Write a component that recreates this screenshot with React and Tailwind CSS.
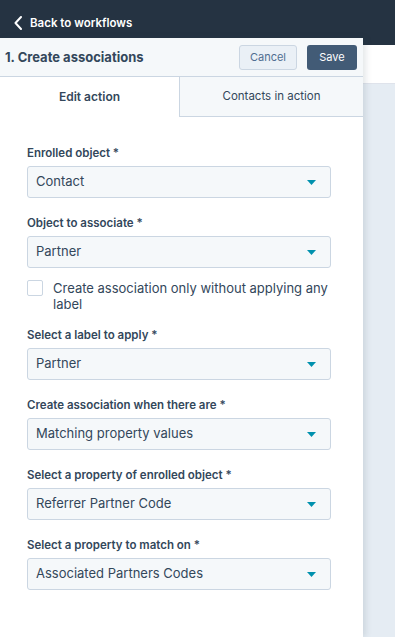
const fields = [
  { label: 'Enrolled object *', value: 'Contact' },
  { label: 'Object to associate *', value: 'Partner', checkbox: true },
  { label: 'Select a label to apply *', value: 'Partner' },
  { label: 'Create association when there are *', value: 'Matching property values' },
  { label: 'Select a property of enrolled object *', value: 'Referrer Partner Code' },
  { label: 'Select a property to match on *', value: 'Associated Partners Codes' },
];

function Caret() {
  return (
    <svg width="9" height="5" viewBox="0 0 9 5" className="shrink-0">
      <path d="M0 0h9L4.5 5z" fill="#0091ae" />
    </svg>
  );
}

function SelectBox({ value }) {
  return (
    <div className="flex items-center justify-between h-[32px] w-[304px] bg-[#f5f8fa] border border-[#cbd6e2] rounded-[3px] pl-[8px] pr-[14px]">
      <span className="text-[13px] text-[#33475b]">{value}</span>
      <Caret />
    </div>
  );
}

export default function App() {
  return (
    <div className="relative w-[395px] h-[637px] overflow-hidden bg-white" style={{ fontFamily: 'Inter, "Noto Sans", sans-serif' }}>
      {/* background page */}
      <div className="h-[45px] bg-[#253342]" />
      <div className="h-[39px] bg-white border-b border-[#dfe3eb]" />
      <div className="h-full bg-[#e5ecf3]" />

      {/* back link */}
      <div className="absolute left-0 top-0 h-[45px] w-full flex items-start pt-[15px] pl-[14px] gap-[8px] text-white">
        <svg width="8" height="14" viewBox="0 0 8 14" className="mt-[1px]">
          <path d="M7 1L1.5 7L7 13" stroke="white" strokeWidth="2" fill="none" strokeLinecap="round" strokeLinejoin="round" />
        </svg>
        <span className="text-[11.5px] font-semibold leading-[16px]">Back to workflows</span>
      </div>

      {/* side panel */}
      <div className="absolute left-0 top-[38px] bottom-0 w-[363px] bg-white flex flex-col shadow-[3px_0_6px_rgba(45,62,80,0.12)]">
        <div className="h-[39px] shrink-0 bg-[#f5f8fa] border-b border-[#cbd6e2] flex items-center justify-between pl-[5px] pr-[6px]">
          <span className="text-[13px] font-bold text-[#33475b] mt-[2px]">1. Create associations</span>
          <div className="flex items-center gap-[10px]">
            <button className="h-[25px] w-[58px] rounded-[3px] border border-[#cbd6e2] bg-[#eaf0f6] text-[11px] text-[#506e91]">Cancel</button>
            <button className="h-[25px] w-[50px] rounded-[3px] bg-[#425b76] text-[11px] text-white">Save</button>
          </div>
        </div>

        <div className="flex h-[40px] shrink-0">
          <div className="w-[179px] flex items-center justify-center text-[12px] font-semibold text-[#33475b]">Edit action</div>
          <div className="flex-1 flex items-center justify-center bg-[#f5f8fa] border-l border-b border-[#cbd6e2] text-[11.5px] text-[#33475b]">Contacts in action</div>
        </div>

        <div className="pl-[27px] pt-[29px] flex flex-col">
          {fields.map((f, i) => (
            <div key={i} className="mb-[18px]">
              <div className="text-[11.5px] font-semibold text-[#33475b] leading-[14px] mb-[6px]">{f.label}</div>
              <SelectBox value={f.value} />
              {f.checkbox && (
                <div className="flex items-start gap-[10px] mt-[12px] -mb-[2px]">
                  <div className="w-[16px] h-[16px] border border-[#cbd6e2] rounded-[2px] bg-white shrink-0" />
                  <span className="text-[13px] leading-[16px] text-[#33475b] w-[290px]">Create association only without applying any label</span>
                </div>
              )}
            </div>
          ))}
        </div>
      </div>
    </div>
  );
}
